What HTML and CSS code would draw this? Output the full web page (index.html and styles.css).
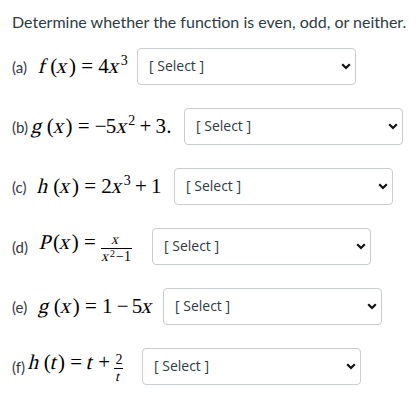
FILE: index.html
```html
<!DOCTYPE html>
<html>
<head>
<meta charset="utf-8">
<link rel="stylesheet" href="styles.css">
</head>
<body>
<div class="page">
  <p class="title">Determine whether the function is even, odd, or neither.</p>
  <div class="row">
    <div class="lead lead-a"><span class="label">(a)</span><span class="math"><i>f</i><span class="sp"></span>(<i>x</i>)<span class="rel">=</span>4<i>x</i><sup>3</sup></span></div>
    <div class="select"><span class="sel-text">[ Select ]</span><svg class="chev" width="10" height="7" viewBox="0 0 10 7"><path d="M1.2 1.2 L5 5 L8.8 1.2" fill="none" stroke="#111" stroke-width="2.2"/></svg></div>
  </div>
  <div class="row">
    <div class="lead lead-b"><span class="label tight">(b)</span><span class="math"><i>g</i><span class="sp"></span>(<i>x</i>)<span class="rel">=</span><span class="mi">−</span>5<i>x</i><sup>2</sup><span class="bin">+</span>3.</span></div>
    <div class="select"><span class="sel-text">[ Select ]</span><svg class="chev" width="10" height="7" viewBox="0 0 10 7"><path d="M1.2 1.2 L5 5 L8.8 1.2" fill="none" stroke="#111" stroke-width="2.2"/></svg></div>
  </div>
  <div class="row">
    <div class="lead lead-c"><span class="label">(c)</span><span class="math"><i>h</i><span class="sp"></span>(<i>x</i>)<span class="rel">=</span>2<i>x</i><sup>3</sup><span class="bin">+</span>1</span></div>
    <div class="select"><span class="sel-text">[ Select ]</span><svg class="chev" width="10" height="7" viewBox="0 0 10 7"><path d="M1.2 1.2 L5 5 L8.8 1.2" fill="none" stroke="#111" stroke-width="2.2"/></svg></div>
  </div>
  <div class="row">
    <div class="lead lead-d"><span class="label">(d)</span><span class="math"><i>P</i>(<i>x</i>)<span class="rel">=</span><span class="frac"><span class="num"><i>x</i></span><span class="den"><i>x</i><sup>2</sup><span class="dm">−</span>1</span></span></span></div>
    <div class="select"><span class="sel-text">[ Select ]</span><svg class="chev" width="10" height="7" viewBox="0 0 10 7"><path d="M1.2 1.2 L5 5 L8.8 1.2" fill="none" stroke="#111" stroke-width="2.2"/></svg></div>
  </div>
  <div class="row">
    <div class="lead lead-e"><span class="label">(e)</span><span class="math"><i>g</i><span class="sp"></span>(<i>x</i>)<span class="rel">=</span>1<span class="bin"><span class="mi">−</span></span>5<i>x</i></span></div>
    <div class="select"><span class="sel-text">[ Select ]</span><svg class="chev" width="10" height="7" viewBox="0 0 10 7"><path d="M1.2 1.2 L5 5 L8.8 1.2" fill="none" stroke="#111" stroke-width="2.2"/></svg></div>
  </div>
  <div class="row">
    <div class="lead lead-f"><span class="label tight">(f)</span><span class="math"><i>h</i><span class="sp"></span>(<i>t</i>)<span class="rel">=</span><i>t</i><span class="bin">+</span><span class="frac"><span class="num">2</span><span class="den"><i>t</i></span></span></span></div>
    <div class="select"><span class="sel-text">[ Select ]</span><svg class="chev" width="10" height="7" viewBox="0 0 10 7"><path d="M1.2 1.2 L5 5 L8.8 1.2" fill="none" stroke="#111" stroke-width="2.2"/></svg></div>
  </div>
</div>
</body>
</html>
```
FILE: styles.css
```css
html, body {
  margin: 0;
  padding: 0;
  background: #ffffff;
}
body {
  font-family: Lato, "Noto Sans", sans-serif;
  color: #2d3b45;
}
.page {
  padding: 14px 12px 0 12px;
}
.title {
  margin: 0 0 18px 0;
  font-size: 16px;
  line-height: 16px;
}
.row {
  display: flex;
  align-items: center;
  height: 37px;
  margin-bottom: 23px;
}
.lead {
  display: flex;
  align-items: center;
  flex: none;
  white-space: nowrap;
}
.lead-a { width: 125px; }
.lead-b { width: 172px; }
.lead-c { width: 162px; }
.lead-d { width: 140px; }
.lead-e { width: 151px; }
.lead-f { width: 130px; }
.label {
  font-size: 15px;
  margin-right: 12px;
}
.label.tight {
  margin-right: 4px;
}
.math {
  font-family: "Liberation Serif", "Times New Roman", serif;
  font-size: 21px;
  letter-spacing: 0.2px;
  color: #000;
  display: inline-flex;
  align-items: baseline;
}
.math i {
  font-style: normal;
  display: inline-block;
  transform: skewX(-14deg);
  padding-right: 1px;
}
.sp {
  display: inline-block;
  width: 3px;
}
.rel {
  margin: 0 5px;
}
.bin {
  margin: 0 4px;
}
.mi {
  display: inline-block;
  width: 11px;
  text-align: center;
}
.math sup {
  font-size: 14px;
  line-height: 0;
  position: relative;
  top: -8px;
}
.frac {
  display: inline-flex;
  flex-direction: column;
  align-items: center;
  align-self: center;
  font-size: 14px;
  line-height: 12px;
  margin-top: 4px;
  letter-spacing: 0;
}
.frac .num {
  border-bottom: 1px solid #000;
  padding: 0 1px 2px;
  align-self: stretch;
  text-align: center;
}
.frac .den {
  padding: 2px 1px 0;
  display: flex;
  align-items: baseline;
}
.frac sup {
  font-size: 10px;
  top: -4px;
}
.dm {
  margin-left: 1px;
}
.select {
  box-sizing: border-box;
  width: 219px;
  height: 37px;
  border: 1px solid #c7cdd1;
  border-radius: 4px;
  display: flex;
  align-items: center;
  justify-content: space-between;
  padding: 0 4px 0 11px;
  background: #fff;
  flex: none;
}
.sel-text {
  font-family: "Open Sans", sans-serif;
  font-size: 14px;
  color: #2d3b45;
  margin-top: -2px;
}
.chev {
  display: block;
}
```
